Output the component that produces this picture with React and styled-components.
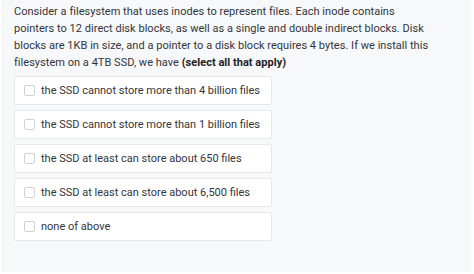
import React from "react";
import styled, { createGlobalStyle } from "styled-components";

const Global = createGlobalStyle`
  html, body {
    margin: 0;
    padding: 0;
    background: #ffffff;
  }
  body {
    font-family: Roboto, "Liberation Sans", sans-serif;
  }
`;

const options = [
  "the SSD cannot store more than 4 billion files",
  "the SSD cannot store more than 1 billion files",
  "the SSD at least can store about 650 files",
  "the SSD at least can store about 6,500 files",
  "none of above",
];

export default function App() {
  return (
    <>
      <Global />
      <Panel>
        <Question>
          Consider a filesystem that uses inodes to represent files. Each inode contains
          <br />
          pointers to 12 direct disk blocks, as well as a single and double indirect blocks. Disk
          <br />
          blocks are 1KB in size, and a pointer to a disk block requires 4 bytes. If we install this
          <br />
          filesystem on a 4TB SSD, we have <b>(select all that apply)</b>
        </Question>
        <Options>
          {options.map((text) => (
            <Option key={text}>
              <Box />
              <span>{text}</span>
            </Option>
          ))}
        </Options>
      </Panel>
    </>
  );
}

const Panel = styled.div`
  width: 469px;
  height: 272px;
  margin-left: 2px;
  box-sizing: border-box;
  background: #f7f8fa;
  border-left: 1px solid #eef0f2;
  padding: 3px 0 0 11px;
`;

const Question = styled.p`
  margin: 0;
  white-space: nowrap;
  font-size: 11px;
  letter-spacing: 0.03px;
  line-height: 17px;
  color: #333539;
  b {
    font-weight: 700;
    color: #1f2124;
  }
`;

const Options = styled.div`
  display: flex;
  flex-direction: column;
  gap: 5px;
  margin-top: 5px;
`;

const Option = styled.label`
  display: flex;
  align-items: center;
  gap: 6px;
  width: 258px;
  height: 29px;
  box-sizing: border-box;
  padding-left: 9px;
  background: #ffffff;
  border: 1px solid #e6e8eb;
  border-radius: 2px;
  font-size: 11px;
  white-space: nowrap;
  color: #333539;
`;

const Box = styled.span`
  width: 11px;
  height: 11px;
  box-sizing: border-box;
  border: 1px solid #cfd2d6;
  border-radius: 2px;
  background: #ffffff;
  flex: none;
`;
